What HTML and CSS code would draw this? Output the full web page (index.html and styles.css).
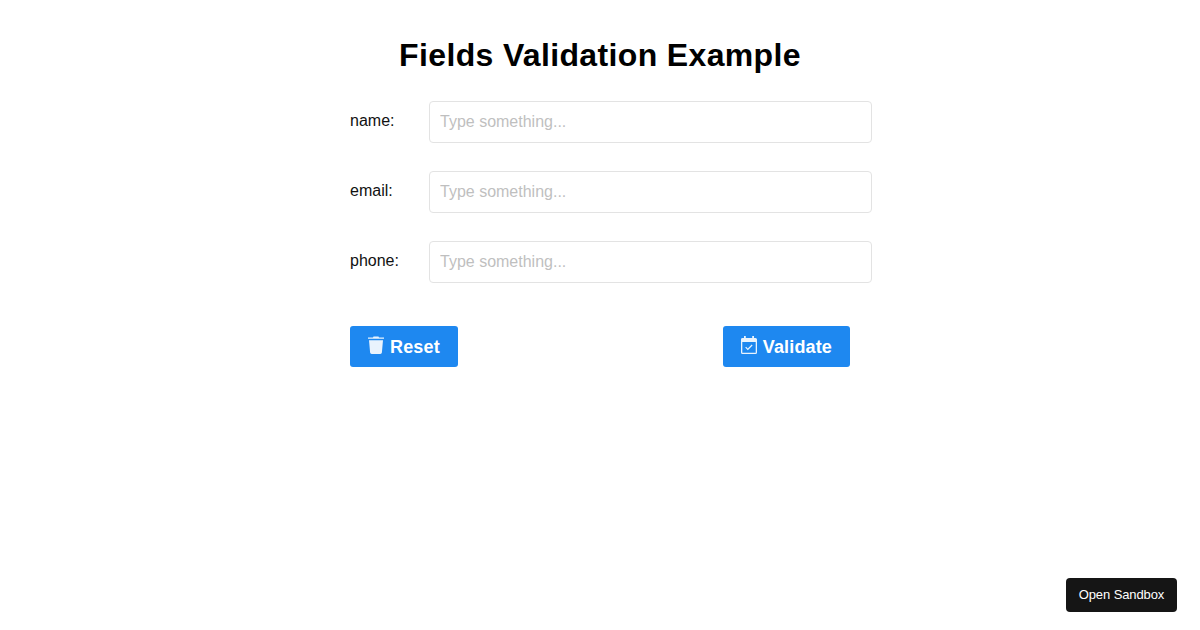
FILE: index.html
```html
<!DOCTYPE html>
<html lang="en">
<head>
<meta charset="utf-8">
<title>Fields Validation Example</title>
<link rel="stylesheet" href="styles.css">
</head>
<body>
<main class="page">
  <h1 class="title">Fields Validation Example</h1>
  <form class="form">
    <div class="row"><label class="label">name:</label><input class="field" placeholder="Type something..."></div>
    <div class="row"><label class="label">email:</label><input class="field" placeholder="Type something..."></div>
    <div class="row"><label class="label">phone:</label><input class="field" placeholder="Type something..."></div>
    <div class="actions">
      <button type="button" class="btn"><svg class="icon" viewBox="0 0 16 18"><path d="M0 1.500h5L5.500.5h5l.5 1h5v1.300H0zM1 4.200h14l-1.100 12.300A1.600 1.600 0 0 1 12.300 18H3.700a1.600 1.600 0 0 1-1.600-1.500z"/></svg><span>Reset</span></button>
      <button type="button" class="btn"><svg class="icon" viewBox="0 0 16 18"><path fill-rule="evenodd" d="M3 0h1.800v2h6.400V0H13v2h1.500A1.500 1.500 0 0 1 16 3.500v13a1.500 1.500 0 0 1-1.500 1.500h-13A1.500 1.500 0 0 1 0 16.500v-13A1.500 1.500 0 0 1 1.500 2H3zM1.300 6v10.700h13.400V6zM6.800 14.200l-2.600-2.600.9-.9 1.700 1.700 3.900-3.900.9.900z"/></svg><span>Validate</span></button>
    </div>
  </form>
</main>
<button type="button" class="sandbox">Open Sandbox</button>
</body>
</html>
```
FILE: styles.css
```css
* { box-sizing: border-box; }
html, body { margin: 0; height: 100%; }
body { background: #fff; font-family: "Liberation Sans", Arial, sans-serif; color: #111; }
.page { width: 500px; margin: 0 auto; padding-top: 34px; }
.title { margin: 0 -100px 24px; text-align: center; font-size: 32px; line-height: 43px; font-weight: 700; color: #000; letter-spacing: 0.35px; }
.form { display: flex; flex-direction: column; }
.row { display: flex; align-items: flex-start; margin-bottom: 28px; width: 522px; }
.label { width: 79px; font-size: 16px; line-height: 40px; }
.field { flex: 1; height: 42px; padding: 0 10px; border: 1px solid #e3e3e3; border-radius: 4px; font: 16px "Liberation Sans", Arial, sans-serif; outline: none; }
.field::placeholder { color: #bfbfbf; opacity: 1; }
.actions { display: flex; justify-content: space-between; margin-top: 15px; }
.btn { display: flex; align-items: center; gap: 6px; height: 41px; padding: 0 18px; background: #1e88f0; color: #fff; border: 0; border-radius: 3px; font: 700 18px "Liberation Sans", Arial, sans-serif; letter-spacing: 0.15px; }
.btn span { position: relative; top: 1px; }
.icon { width: 16px; height: 18px; fill: #fff; opacity: .9; margin-top: -4px; }
.sandbox { position: fixed; right: 23px; bottom: 18px; width: 111px; height: 34px; padding: 0 0 2px; background: #151515; color: #fff; border: 0; border-radius: 4px; font: 13px "Liberation Sans", Arial, sans-serif; letter-spacing: -0.1px; }
```
